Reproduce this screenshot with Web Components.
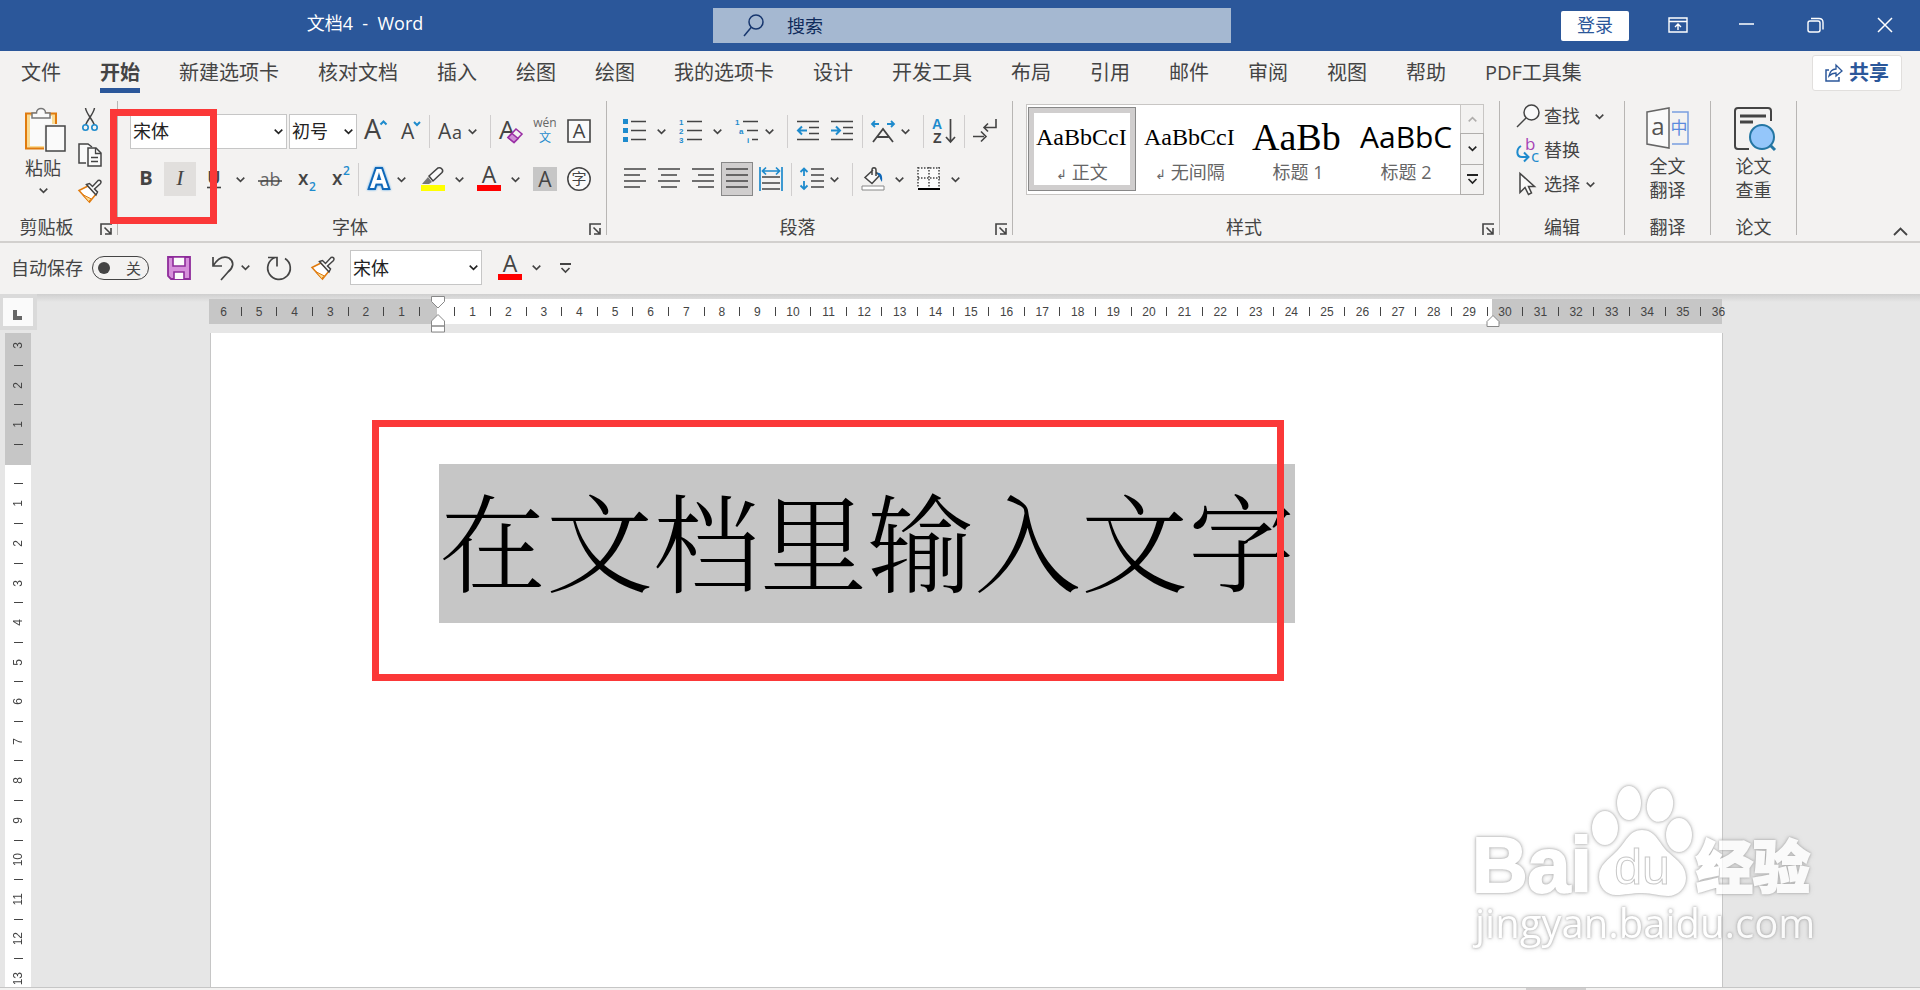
<!DOCTYPE html>
<html lang="zh-CN">
<head>
<meta charset="UTF-8">
<title>文档4 - Word</title>
<style>
    html, body {
        margin: 0;
        height: 100%;
        overflow: hidden;
        font-family: "Open Sans", "Noto Sans CJK SC", sans-serif;
        font-size: 18px;
        color: #444;
    }
    word-window { height: 100%; }
</style>
</head>
<body>
<word-window></word-window>

<script>
const INK = '#444';
const BLUE = '#1e8bcd';

// 24x24 unless a size is given in SIZES
const ICONS = {
    find: `<circle cx="15.500" cy="8.500" r="7.500" fill="#fafafa" stroke="${INK}" stroke-width="1.500"/><path d="M10 14L1 23" stroke="${INK}" stroke-width="1.500"/>`,
    replace: `<text x="9" y="12" font-size="17" fill="#a643b5">b</text><text x="15" y="24" font-size="17" fill="${BLUE}">c</text><path d="M5 8C0 11 0 19 6 19h6M8 14.500l4.500 4.500L8 23.500" fill="none" stroke="${BLUE}" stroke-width="2"/>`,
    select: `<path d="M4 1.500v19l5-5 3.500 7 3-1.500-3-6.500h6z" fill="#fafafa" stroke="${INK}" stroke-width="1.500"/>`,
    paste: `<path d="M1 6.500h30v35H1z" fill="#fadb94" stroke="#e07b0f" stroke-width="2"/><path d="M5 9h22v30H5z" fill="#fafafa"/><path d="M7 11V6h4.500c0-6 9-6 9 0H25v5z" fill="#fafafa" stroke="#777" stroke-width="1.500"/><path d="M19 17h22v28H19z" fill="#f3f2f1"/><path d="M21 19h19v25H21z" fill="#fafafa" stroke="${INK}" stroke-width="1.500"/>`,
    cut: `<path d="M7.500 1c1 6 6 10 9 17M16.500 1c-1 6-6 10-9 17" fill="none" stroke="${INK}" stroke-width="1.500"/><circle cx="7.500" cy="20.500" r="2.700" fill="none" stroke="${BLUE}" stroke-width="1.600"/><circle cx="16.500" cy="20.500" r="2.700" fill="none" stroke="${BLUE}" stroke-width="1.600"/>`,
    copy: `<path d="M8 20H1V1h9l4 3" fill="#fafafa" stroke="${INK}" stroke-width="1.500"/><path d="M10 5h8l5 5v13H10z" fill="#fafafa" stroke="${INK}" stroke-width="1.500"/><path d="M17.500 5v5.500H23M13 14.500h7M13 18.500h7" fill="none" stroke="${INK}" stroke-width="1.300"/>`,
    brush: `<path d="M1 11.500l9-4.500 8 8-6.500 8z" fill="#fff" stroke="#e07b0f" stroke-width="1.500"/><path d="M4.500 15.500l9 4.500-3 2.500z" fill="#fadb94" stroke="#e07b0f" stroke-width="1"/><path d="M8.500 5.500l3-1 3 3 5.500-6c2-1 4 1 2.500 3l-6 5.500 3 3-1.500 3z" fill="#fafafa" stroke="${INK}" stroke-width="1.500"/>`,
    grow: `<text x="1" y="20" font-size="27" fill="${INK}">A</text><path d="M17.500 5.500L20.500 2.500 23.500 5.500" fill="none" stroke="${BLUE}" stroke-width="2"/>`,
    shrink: `<text x="4" y="20" font-size="21" fill="${INK}">A</text><path d="M17 3L20 6 23 3" fill="none" stroke="${BLUE}" stroke-width="2"/>`,
    case: `<text x="0" y="20" font-size="21" fill="${INK}">A</text><text x="14" y="20" font-size="18" fill="${INK}">a</text>`,
    clear: `<text x="0" y="20" font-size="26" fill="${INK}">A</text><path d="M9 18.500l8-8.500 6 5-8 8.500z" fill="#f3f2f1" stroke="#9a2fa5" stroke-width="1.600"/><path d="M9 18.500l4-4 6 5-4 4z" fill="#cf8fd6" stroke="#9a2fa5" stroke-width="1.600"/>`,
    pinyin: `<text x="12" y="8" font-size="12" text-anchor="middle" fill="#666">wén</text><text x="12" y="23" font-size="12" text-anchor="middle" fill="${BLUE}">文</text>`,
    charbox: `<path d="M1 1h22v22H1z" fill="#fafafa" stroke="${INK}" stroke-width="1.600"/><text x="12" y="19" font-size="20" text-anchor="middle" fill="${INK}">A</text>`,
    bold: `<text x="12" y="18" font-size="20" font-weight="700" text-anchor="middle" fill="${INK}">B</text>`,
    italic: `<text x="12" y="18" font-size="22" font-style="italic" font-family="Liberation Serif, serif" text-anchor="middle" fill="${INK}">I</text>`,
    underline: `<text x="12" y="17" font-size="18" font-weight="600" text-anchor="middle" fill="${INK}">U</text><path d="M5 20.500h14" stroke="${INK}" stroke-width="1.600"/>`,
    strike: `<text x="12" y="19" font-size="18" text-anchor="middle" fill="#666">ab</text><path d="M0 14h24" stroke="${INK}" stroke-width="1.500"/>`,
    sub: `<text x="6" y="18" font-size="19" font-weight="600" fill="${INK}">x</text><text x="17" y="24" font-size="12" font-weight="600" fill="${BLUE}">2</text>`,
    sup: `<text x="6" y="18" font-size="19" font-weight="600" fill="${INK}">x</text><text x="17" y="8" font-size="12" font-weight="600" fill="${BLUE}">2</text>`,
    effects: `<text x="12" y="21" font-size="26" font-weight="700" text-anchor="middle" fill="#fff" stroke="#1068b8" stroke-width="4" paint-order="stroke">A</text>`,
    highlight: `<path d="M7 10l4 5-3 2H1z" fill="#777"/><path d="M8 9L17 1c3-1 6 2 4 4.500l-9 8.500z" fill="#fafafa" stroke="${INK}" stroke-width="1.500"/><path d="M0 18h24v6H0z" fill="#ff0"/>`,
    color: `<text x="12" y="16" font-size="23" text-anchor="middle" fill="${INK}">A</text><path d="M0 18h24v6H0z" fill="#f00"/>`,
    shading: `<path d="M0 0h24v24H0z" fill="#c6c6c6"/><text x="12" y="20" font-size="21" text-anchor="middle" fill="${INK}">A</text>`,
    circled: `<circle cx="12" cy="12" r="11.200" fill="#fafafa" stroke="${INK}" stroke-width="1.500"/><text x="12" y="17" font-size="15" text-anchor="middle" fill="${INK}">字</text>`,
    bullets: `<path d="M0 0h5v5H0zM0 9h5v5H0zM0 18h5v5H0z" fill="${BLUE}"/><path d="M8 2.500h15M8 11.500h15M8 20.500h15" stroke="${INK}" stroke-width="1.600"/>`,
    numbers: `<g font-size="8" font-weight="700" fill="${BLUE}" font-family="Liberation Sans, sans-serif"><text x="0" y="6">1</text><text x="0" y="15">2</text><text x="0" y="24">3</text></g><path d="M8 2.500h15M8 11.500h15M8 20.500h15" stroke="${INK}" stroke-width="1.600"/>`,
    levels: `<g font-size="8" font-weight="700" fill="${BLUE}" font-family="Liberation Sans, sans-serif"><text x="0" y="6">1</text><text x="4" y="15">a</text><text x="12" y="24">i</text></g><path d="M8 2.500h15M12 11.500h11M17 20.500h6" stroke="${INK}" stroke-width="1.600"/>`,
    outdent: `<path d="M1 2.500h22M13 8.500h10M13 14.500h10M1 20.500h22" stroke="${INK}" stroke-width="1.600"/><path d="M11 11.500H2M6 7.500l-4 4 4 4" fill="none" stroke="${BLUE}" stroke-width="2"/>`,
    indent: `<path d="M1 2.500h22M13 8.500h10M13 14.500h10M1 20.500h22" stroke="${INK}" stroke-width="1.600"/><path d="M1 11.500h9M6 7.500l4 4-4 4" fill="none" stroke="${BLUE}" stroke-width="2"/>`,
    scale: `<path d="M2 23L12 10l10 13M6.500 18h11" fill="none" stroke="${INK}" stroke-width="1.800"/><path d="M8 5H1M4 2L1 5l3 3M16 5h7M20 2l3 3-3 3" fill="none" stroke="${BLUE}" stroke-width="1.800"/>`,
    sort: `<g font-family="Liberation Sans, sans-serif" font-size="14" font-weight="700"><text x="0" y="10" fill="${BLUE}">A</text><text x="1" y="24" fill="${INK}">Z</text></g><path d="M18.500 0v23M14 18l4.500 5 4.500-5" fill="none" stroke="${INK}" stroke-width="1.700"/>`,
    marks: `<path d="M23 0v8.500H11M15 4.500l-4 4 4 4M0 17.500h11M8 12.500l5 5-5 5" fill="none" stroke="${INK}" stroke-width="1.600"/>`,
    left: `<path d="M1 2h22M1 8h16M1 14h22M1 20h16" stroke="${INK}" stroke-width="1.700"/>`,
    center: `<path d="M1 2h22M4 8h16M1 14h22M4 20h16" stroke="${INK}" stroke-width="1.700"/>`,
    right: `<path d="M1 2h22M7 8h16M1 14h22M7 20h16" stroke="${INK}" stroke-width="1.700"/>`,
    justify: `<path d="M1 2h22M1 8h22M1 14h22M1 20h22" stroke="${INK}" stroke-width="1.700"/>`,
    distribute: `<path d="M1 0v24M23 0v24M4 4h16M7 .500L3.500 4 7 7.500M17 .500L20.500 4 17 7.500" fill="none" stroke="${BLUE}" stroke-width="1.700"/><path d="M3 10h18M3 16h18M3 22h18" stroke="${INK}" stroke-width="1.700"/>`,
    spacing: `<path d="M4 2v7M.500 5L4 1.500 7.500 5M4 14v8M.500 18.500L4 22l3.500-3.500" fill="none" stroke="${BLUE}" stroke-width="1.800"/><path d="M11 2h13M11 8h13M11 14h13M11 20h13" stroke="${INK}" stroke-width="1.700"/>`,
    fill: `<path d="M12 3L4 10.500l7 6 7.500-8L15 5M11 8V3c0-3 4-3 4 0v6" fill="#fafafa" stroke="${INK}" stroke-width="1.500"/><path d="M16 6c4-1 6 3 5 9-2-2-2-5-3-6z" fill="#1068b8"/><path d="M1 19h22v4H1z" fill="#fff" stroke="#888"/>`,
    borders: `<path d="M1 1h21v20H1z" fill="#fafafa"/><path d="M1 1h22M1 11h22M1 0v20M12 0v20M22 0v20" stroke="${INK}" stroke-width="1.500" stroke-dasharray="1.500 1.500"/><path d="M1 22h22" stroke="#000" stroke-width="2"/>`,
    translate: `<path d="M1 5L23 1v40L1 37z" fill="#fafafa" stroke="#666" stroke-width="1.500"/><text x="12" y="28" font-size="24" text-anchor="middle" fill="#555">a</text><path d="M26 5h16v32H26" fill="none" stroke="#7a9fe0" stroke-width="1.500"/><text x="33" y="27" font-size="17" text-anchor="middle" fill="#5b8ade">中</text>`,
    paper: `<g transform="translate(2 0)"><path d="M15 42H4q-3 0-3-3V4q0-3 3-3h30q3 0 3 3v10" fill="none" stroke="${INK}" stroke-width="2"/><path d="M6 9h26M6 15h13" stroke="${INK}" stroke-width="3"/><circle cx="28" cy="30" r="12" fill="#94c6fa" stroke="#2476a3" stroke-width="2"/><path d="M36 38l5 5" stroke="#2476a3" stroke-width="3"/></g>`,
    save: `<path d="M1 1h22v22H4l-3-3z" fill="#d68fdb" stroke="#8e2c9b" stroke-width="1.800"/><path d="M6 1h12v9H6zM7 23v-7h10v7" fill="#fafafa" stroke="#8e2c9b" stroke-width="1.600"/>`,
    undo: `<path d="M2 1v9h9M2 10c5-8 11-10 16-8 6 4 4 10-1 14l-7 8" fill="none" stroke="${INK}" stroke-width="1.700"/>`,
    redo: `<path d="M8 1.500A11.300 11.300 0 1 0 18 2.500M1 1.500h9v9" fill="none" stroke="${INK}" stroke-width="1.700"/>`,
    launcher: `<path d="M1 12V1h11" fill="none" stroke="${INK}" stroke-width="1.600"/><path d="M4.500 4.500L11 11M11 5v6H5" fill="none" stroke="${INK}" stroke-width="1.600"/>`,
    chevron: `<path d="M.700.700L4.500 4.300 8.300.700" fill="none" stroke="currentColor" stroke-width="1.600"/>`,
    up: `<path d="M.700 4.300L4.500.700 8.300 4.300" fill="none" stroke="currentColor" stroke-width="1.600"/>`,
    more: `<path d="M0 1h11" stroke="currentColor" stroke-width="2"/><path d="M1.500 5L5.500 9l4-4" fill="none" stroke="currentColor" stroke-width="1.600"/>`,
    collapse: `<path d="M1 8L7.500 1.500 14 8" fill="none" stroke="${INK}" stroke-width="1.800"/>`,
    search: `<circle cx="13" cy="8" r="7" fill="none" stroke="#17366e" stroke-width="1.500"/><path d="M8.500 13L1 22" stroke="#17366e" stroke-width="1.500"/>`,
    display: `<path d="M1 1h18v14H1zM1 4.500h18M10 13V7M7 10l3-3 3 3" fill="none" stroke="#fff" stroke-width="1.400"/>`,
    minimize: `<path d="M2 7h15" stroke="#fff" stroke-width="1.500"/>`,
    restore: `<rect x="2" y="4" width="12" height="11" rx="2" fill="none" stroke="#fff" stroke-width="1.400"/><path d="M5 1.500h8q4 0 4 4v7" fill="none" stroke="#fff" stroke-width="1.400"/>`,
    close: `<path d="M3 1l14 14M17 1L3 15" stroke="#fff" stroke-width="1.500"/>`,
    share: `<path d="M4 6H1v11h13v-4" fill="none" stroke="#2b579a" stroke-width="1.500"/><path d="M4 12c1-5 3-7 7-7V1l6 6-6 5V9c-3 0-5 1-7 3z" fill="none" stroke="#2b579a" stroke-width="1.300"/>`
};

const SIZES = {
    paste: [42, 46], translate: [43, 43], paper: [43, 43], launcher: [13, 13], chevron: [9, 5], up: [9, 5],
    more: [11, 10], collapse: [15, 9], search: [21, 23], display: [20, 16], minimize: [20, 16],
    restore: [20, 16], close: [20, 16], share: [18, 18]
};

function icon(name) {
    const [w, h] = SIZES[name] || [24, 24];
    return `<svg class="icon icon-${name}" width="${w}" height="${h}" viewBox="0 0 ${w} ${h}" aria-hidden="true">${ICONS[name]}</svg>`;
}

const RESET = `
    *, *::before, *::after { box-sizing: border-box; }
    button, input, select {
        margin: 0; padding: 0; border: 0; background: none;
        font: inherit; color: inherit; border-radius: 0; outline: none;
    }
    .icon { display: block; flex: none; overflow: visible; }
    .icon-effects { filter: drop-shadow(0 0 1px #4aa3e8); }
`;

// Base class: every element draws its own markup once
class WordElement extends HTMLElement {
    constructor() {
        super();
        this.attachShadow({ mode: 'open' });
    }

    connectedCallback() {
        this.shadowRoot.innerHTML = `<style>${RESET}${this.styles()}</style>${this.render()}`;
    }

    styles() { return ''; }
    render() { return '<slot></slot>'; }
}

class ToolButton extends WordElement {
    styles() {
        return `
            :host { display: block; }
            button { display: flex; align-items: center; height: 34px; width: 32px; padding: 0 4px; }
            :host([menu="split"]) button { width: 54px; gap: 10px; }
            :host([menu="drop"]) button { width: 52px; gap: 6px; }
            :host([state="hover"]) button { background: #e1dfdd; }
            :host([state="on"]) button { background: #d0cece; border: 1px solid #888; padding: 0 3px; }
            :host([compact]) button { height: 24px; padding: 0; width: 24px; }
        `;
    }

    render() {
        const menu = this.hasAttribute('menu') ? icon('chevron') : '';
        return `<button type="button" aria-label="${this.getAttribute('icon')}">${icon(this.getAttribute('icon'))}${menu}</button>`;
    }
}

class FontSelect extends WordElement {
    styles() {
        return `
            :host { display: block; }
            label { display: grid; align-items: center; position: relative; }
            select {
                grid-area: 1 / 1; appearance: none; width: 100%; height: 35px; padding: 0 24px 0 2px;
                background: #fff; border: 1px solid #c6c6c6; color: #222; line-height: 32px;
            }
            .icon { grid-area: 1 / 1; justify-self: end; margin-right: 4px; color: #222; pointer-events: none; }
        `;
    }

    render() {
        return `<label><select aria-label="${this.getAttribute('label')}"><option>${this.getAttribute('value')}</option></select>${icon('chevron')}</label>`;
    }
}

class ToolSeparator extends WordElement {
    styles() {
        return ':host { display: block; width: 1px; height: 33px; margin: 0 2px; background: #d0cece; }';
    }
    render() { return ''; }
}

class RibbonGroup extends WordElement {
    styles() {
        return `
            :host { display: flex; flex-direction: column; height: 134px; border-right: 1px solid #b8b6b4; }
            .body { flex: 1; padding: var(--group-padding, 12px 11px 0 12px); }
            footer { display: flex; height: 16px; line-height: 16px; }
            span { flex: 1; text-align: center; white-space: nowrap; }
            button { width: 24px; padding: 4px 0 0 7px; }
        `;
    }

    render() {
        const launcher = this.hasAttribute('launcher') ? `<button type="button" aria-label="更多">${icon('launcher')}</button>` : '';
        return `<div class="body"><slot></slot></div><footer><span>${this.getAttribute('label')}</span>${launcher}</footer>`;
    }
}

class TitleBar extends WordElement {
    styles() {
        return `
            :host {
                display: grid; grid-template-columns: 713fr 518fr 689fr; align-items: center;
                height: 51px; background: #2b579a; color: #fff;
            }
            h1 { margin: 0; padding: 0 0 6px 17px; font-size: 18px; line-height: 24px; font-weight: 400; text-align: center; white-space: pre; }
            .field { display: flex; align-items: center; gap: 23px; height: 35px; padding-left: 30px; background: #a5b8d1; color: #0f2b5b; }
            .field input { flex: 1; height: 35px; }
            .field input::placeholder { color: #0f2b5b; opacity: 1; }
            .right { display: flex; justify-content: flex-end; align-items: center; padding-right: 1px; }
            .login { width: 68px; height: 30px; margin-right: 14px; padding-bottom: 2px; border-radius: 2px; background: #fff; color: #2b579a; line-height: 28px; }
            .win { display: grid; place-items: center; width: 69px; height: 51px; padding-bottom: 1px; }
        `;
    }

    render() {
        const buttons = ['display', 'minimize', 'restore', 'close']
            .map(name => `<button type="button" class="win" aria-label="${name}">${icon(name)}</button>`).join('');
        return `
            <h1>文档4  -  Word</h1>
            <label class="field">${icon('search')}<input type="text" placeholder="搜索" aria-label="搜索"></label>
            <div class="right"><button type="button" class="login">登录</button>${buttons}</div>
        `;
    }
}

class RibbonTabs extends WordElement {
    styles() {
        return `
            :host { display: flex; align-items: flex-start; justify-content: space-between; height: 50px; padding: 0 18px 0 21px; }
            nav { display: flex; gap: 39px; padding-top: 8px; font-size: 20px; }
            nav button { padding: 0 0 1px; border-bottom: 5px solid transparent; line-height: 28px; white-space: nowrap; }
            nav button[aria-selected="true"] { font-weight: 700; border-color: #2b579a; }
            .share {
                display: flex; align-items: center; justify-content: center; gap: 6px; height: 36px; width: 90px; margin-top: 4px;
                background: #fff; border: 1px solid #e1dfdd; border-radius: 3px;
                color: #2b579a; font-size: 20px; line-height: 28px; font-weight: 700;
            }
        `;
    }

    render() {
        const tabs = ['文件', '开始', '新建选项卡', '核对文档', '插入', '绘图', '绘图', '我的选项卡', '设计', '开发工具',
            '布局', '引用', '邮件', '审阅', '视图', '帮助', 'PDF工具集'];
        return `
            <nav role="tablist">${tabs.map(tab => `<button type="button" role="tab" aria-selected="${tab === '开始'}">${tab}</button>`).join('')}</nav>
            <button type="button" class="share">${icon('share')}共享</button>
        `;
    }
}

class StyleCard extends WordElement {
    styles() {
        return `
            :host { display: block; width: 108px; }
            button { display: flex; flex-direction: column; width: 100%; height: 84px; padding: 6px; overflow: hidden; }
            :host([selected]) button { border: 1px solid #888; box-shadow: inset 0 0 0 5px #d0cece; padding: 5px; }
            .sample {
                width: 100%; height: 48px; line-height: 48px; padding: 0 2px; overflow: hidden;
                text-align: left; color: #000; white-space: nowrap;
                font-size: var(--sample-size, 24px); font-family: var(--sample-font, "Liberation Serif", serif);
            }
            .name { width: 100%; line-height: 22px; color: #666; text-align: center; white-space: pre; }
            small { font-size: 13px; }
        `;
    }

    render() {
        const mark = this.hasAttribute('linked') ? '<small>↲</small> ' : '';
        return `<button type="button"><span class="sample">${this.getAttribute('sample')}</span><span class="name">${mark}<slot></slot></span></button>`;
    }
}

class StyleGallery extends WordElement {
    styles() {
        return `
            :host { display: flex; height: 91px; width: 458px; border: 1px solid #c8c6c4; background: #fff; }
            .cards { display: flex; flex: 1; padding: 2px 0 0 1px; }
            .scroll { display: grid; grid-template-rows: 1fr 1fr 1fr; width: 24px; margin: -1px; background: #f3f2f1; color: #222; }
            .scroll button { display: grid; place-items: center; border: 1px solid #b0aeac; margin-top: -1px; }
            .scroll button:first-child { color: #b0aeac; border-color: #c8c6c4; margin-top: 0; }
        `;
    }

    render() {
        return `
            <div class="cards"><slot></slot></div>
            <div class="scroll">${['up', 'chevron', 'more'].map(name => `<button type="button" aria-label="${name}">${icon(name)}</button>`).join('')}</div>
        `;
    }
}

class WordRibbon extends WordElement {
    styles() {
        return `
            :host { display: flex; height: 142px; border-bottom: 2px solid #d2d0ce; }
            .row { display: flex; align-items: center; gap: 2px; height: 36px; }
            .row + .row { margin-top: 12px; }
            .name { width: 157px; }
            .size { width: 68px; }
            .clipboard { --group-padding: 6px 15px 0 25px; }
            .clipboard .cols { display: flex; gap: 11px; }
            .paste { display: flex; flex-direction: column; align-items: center; width: 42px; line-height: 24px; }
            .paste span { margin: 3px 6px 0 0; }
            .paste .icon-chevron { margin: 8px 6px 0 0; }
            .stack { display: flex; flex-direction: column; gap: 12px; }
            .styles { --group-padding: 3px 15px 0 13px; }
            .h1 { --sample-size: 38px; }
            .h2 { --sample-size: 30px; --sample-font: "Open Sans"; }
            .edit { --group-padding: 0 16px; width: 125px; }
            .edit button { display: flex; align-items: center; gap: 4px; height: 30px; margin-bottom: 4px; white-space: nowrap; line-height: 24px; }
            .edit .icon-chevron { margin-left: 2px; }
            .edit .icon-find + span + .icon-chevron { margin-left: 11px; }
            .wide { --group-padding: 6px 21px 0; width: 86px; }
            .wide button { display: flex; flex-direction: column; align-items: center; gap: 4px; line-height: 24px; width: 43px; }
            .toggle { margin: auto 12px 5px auto; }
        `;
    }

    render() {
        const item = (name, text, menu) => `<button type="button">${icon(name)}<span>${text}</span>${menu ? icon('chevron') : ''}</button>`;
        return `
            <ribbon-group class="clipboard" label="剪贴板" launcher>
                <div class="cols">
                    <button type="button" class="paste">${icon('paste')}<span>粘贴</span>${icon('chevron')}</button>
                    <div class="stack">
                        <tool-button compact icon="cut"></tool-button>
                        <tool-button compact icon="copy"></tool-button>
                        <tool-button compact icon="brush"></tool-button>
                    </div>
                </div>
            </ribbon-group>
            <ribbon-group label="字体" launcher>
                <div class="row">
                    <font-select class="name" label="字体" value="宋体"></font-select>
                    <font-select class="size" label="字号" value="初号"></font-select>
                    <tool-button icon="grow"></tool-button>
                    <tool-button icon="shrink"></tool-button>
                    <tool-separator></tool-separator>
                    <tool-button icon="case" menu="drop"></tool-button>
                    <tool-separator></tool-separator>
                    <tool-button icon="clear"></tool-button>
                    <tool-button icon="pinyin"></tool-button>
                    <tool-button icon="charbox"></tool-button>
                </div>
                <div class="row">
                    <tool-button icon="bold"></tool-button>
                    <tool-button icon="italic" state="hover"></tool-button>
                    <tool-button icon="underline" menu="split"></tool-button>
                    <tool-button icon="strike"></tool-button>
                    <tool-button icon="sub"></tool-button>
                    <tool-button icon="sup"></tool-button>
                    <tool-separator></tool-separator>
                    <tool-button icon="effects" menu="drop"></tool-button>
                    <tool-button icon="highlight" menu="split"></tool-button>
                    <tool-button icon="color" menu="split"></tool-button>
                    <tool-button icon="shading"></tool-button>
                    <tool-button icon="circled"></tool-button>
                </div>
            </ribbon-group>
            <ribbon-group label="段落" launcher>
                <div class="row">
                    <tool-button icon="bullets" menu="split"></tool-button>
                    <tool-button icon="numbers" menu="split"></tool-button>
                    <tool-button icon="levels" menu="drop"></tool-button>
                    <tool-separator></tool-separator>
                    <tool-button icon="outdent"></tool-button>
                    <tool-button icon="indent"></tool-button>
                    <tool-separator></tool-separator>
                    <tool-button icon="scale" menu="drop"></tool-button>
                    <tool-separator></tool-separator>
                    <tool-button icon="sort"></tool-button>
                    <tool-separator></tool-separator>
                    <tool-button icon="marks"></tool-button>
                </div>
                <div class="row">
                    <tool-button icon="left"></tool-button>
                    <tool-button icon="center"></tool-button>
                    <tool-button icon="right"></tool-button>
                    <tool-button icon="justify" state="on"></tool-button>
                    <tool-button icon="distribute"></tool-button>
                    <tool-separator></tool-separator>
                    <tool-button icon="spacing" menu="drop"></tool-button>
                    <tool-separator></tool-separator>
                    <tool-button icon="fill" menu="split"></tool-button>
                    <tool-button icon="borders" menu="split"></tool-button>
                </div>
            </ribbon-group>
            <ribbon-group class="styles" label="样式" launcher>
                <style-gallery>
                    <style-card sample="AaBbCcI" linked selected>正文</style-card>
                    <style-card sample="AaBbCcI" linked>无间隔</style-card>
                    <style-card class="h1" sample="AaBb">标题 1</style-card>
                    <style-card class="h2" sample="AaBbC">标题 2</style-card>
                </style-gallery>
            </ribbon-group>
            <ribbon-group class="edit" label="编辑">
                ${item('find', '查找', true)}${item('replace', '替换')}${item('select', '选择', true)}
            </ribbon-group>
            <ribbon-group class="wide" label="翻译">${item('translate', '全文<br>翻译')}</ribbon-group>
            <ribbon-group class="wide" label="论文">${item('paper', '论文<br>查重')}</ribbon-group>
            <button type="button" class="toggle" aria-label="折叠功能区">${icon('collapse')}</button>
        `;
    }
}

class QuickAccess extends WordElement {
    styles() {
        return `
            :host { display: flex; align-items: center; height: 51px; padding: 0 11px 2px; }
            .autosave { display: flex; align-items: center; gap: 9px; margin-right: 14px; line-height: 24px; }
            .switch { display: grid; align-items: center; width: 57px; height: 24px; }
            .switch > * { grid-area: 1 / 1; }
            input { appearance: none; width: 57px; height: 24px; border: 1px solid #444; border-radius: 12px; }
            input::before { content: ""; display: block; width: 12px; height: 12px; margin: 5px; border-radius: 50%; background: #444; }
            .switch span { justify-self: end; margin-right: 8px; font-size: 15px; line-height: 20px; }
            .font { width: 132px; margin: 0 12px 0 11px; }
            .save { margin-right: 12px; }
            .undo { margin-right: 4px; }
            .redo { margin-right: 12px; }
            .custom { margin-left: 12px; }
        `;
    }

    render() {
        return `
            <label class="autosave">自动保存<span class="switch"><input type="checkbox" role="switch"><span>关</span></span></label>
            <tool-button class="save" icon="save"></tool-button>
            <tool-button class="undo" icon="undo" menu="drop"></tool-button>
            <tool-button class="redo" icon="redo"></tool-button>
            <tool-button icon="brush"></tool-button>
            <font-select class="font" label="字体" value="宋体"></font-select>
            <tool-button icon="color" menu="split"></tool-button>
            <button type="button" class="custom" aria-label="自定义">${icon('more')}</button>
        `;
    }
}

class EditRuler extends WordElement {
    styles() {
        return `
            :host {
                display: flex; justify-content: space-between; align-items: center; position: relative;
                font: 12px "Liberation Sans", sans-serif; color: #444;
            }
            :host([axis="x"]) {
                height: 25px; padding: 0 3px 0 14px;
                background: linear-gradient(to right, #c6c6c6 228px, #fff 228px, #fff calc(100% - 230px), #c6c6c6 calc(100% - 230px));
            }
            :host([axis="y"]) {
                flex-direction: column; width: 26px; padding: 12px 0 8px;
                background: linear-gradient(to bottom, #c6c6c6 132px, #fff 132px);
            }
            span { display: flex; justify-content: center; align-items: center; width: 1px; height: 1px; white-space: nowrap; }
            i { flex: none; width: 1px; height: 9px; background: #444; }
            :host([axis="y"]) i { width: 9px; height: 1px; }
            :host([axis="y"]) b { writing-mode: vertical-rl; transform: rotate(180deg); }
            b { font-weight: 400; }
            svg { position: absolute; overflow: visible; fill: #fff; stroke: #888; }
            .start { left: 222px; top: -3px; }
            .end { right: 222px; top: 16px; }
        `;
    }

    render() {
        const from = Number(this.getAttribute('from'));
        const to = Number(this.getAttribute('to'));
        const marks = [];
        for (let n = from; n <= to; n++) {
            marks.push(`<span>${n === 0 ? '' : `<b>${Math.abs(n)}</b>`}</span>`);
            if (n < to) marks.push('<span><i></i></span>');
        }
        const stops = this.getAttribute('axis') === 'x' ? `
            <svg class="start" width="14" height="37"><path d="M.500.500h13v5L7 12 .500 5.500zM7 18.500l6.500 6.500v5H.500v-5zM.500 30h13v6H.500z"/></svg>
            <svg class="end" width="14" height="13"><path d="M7 .500l6 6v5H1v-5z"/></svg>` : '';
        return marks.join('') + stops;
    }
}

class DocPage extends WordElement {
    styles() {
        return `
            :host { display: block; background: #fff; border: solid #c6c6c6; border-width: 0 1px; padding: 131px 228px 0; }
            p { margin: 0; font: 300 107px/149px "Noto Serif CJK SC", "Noto Sans CJK SC", serif; color: #000; white-space: nowrap; }
            mark { display: inline-block; height: 159px; background: #c6c6c6; color: inherit; }
        `;
    }

    render() { return '<p><mark><slot></slot></mark></p>'; }
}

class WorkSpace extends WordElement {
    styles() {
        return `
            :host {
                display: grid; grid-template: 39px minmax(0, 1fr) / 37px minmax(0, 1fr);
                background: linear-gradient(#cfcfcf, #e6e6e6 8px);
            }
            .corner { width: 37px; height: 36px; border: 4px solid #dadada; border-left-width: 3px; background: #fafafa; }
            .corner svg { display: block; margin: 12px 0 0 10px; }
            .across { margin: 5px 198px 0 172px; }
            .down { margin-left: 5px; }
            doc-page { margin: 0 197px 0 173px; }
        `;
    }

    render() {
        return `
            <div class="corner"><svg width="9" height="10"><path d="M2 0v8h7" fill="none" stroke="#666" stroke-width="4"/></svg></div>
            <edit-ruler class="across" axis="x" from="-6" to="36"></edit-ruler>
            <edit-ruler class="down" axis="y" from="-3" to="13"></edit-ruler>
            <doc-page><slot></slot></doc-page>
        `;
    }
}

class StatusStrip extends WordElement {
    styles() {
        return `
            :host { display: block; height: 3px; border-top: 1px solid #c6c6c6; background: #f3f2f1; }
            div { width: 60px; height: 2px; margin-left: auto; margin-right: 334px; background: #d0cece; }
        `;
    }
    render() { return '<div></div>'; }
}

// Red callout laid over the window
class CalloutFrame extends WordElement {
    styles() {
        return ':host { display: block; position: absolute; box-sizing: border-box; border: 7px solid #fb3838; pointer-events: none; }';
    }
    render() { return ''; }
}

class SiteMark extends WordElement {
    styles() {
        return `
            :host { display: block; position: absolute; pointer-events: none; }
            svg { display: block; overflow: visible; fill: #fff; opacity: .8; filter: drop-shadow(0 0 1px #999) drop-shadow(0 0 2px #bbb); }
            .bold { stroke: #fff; stroke-width: 2; }
            .du { fill: #fff; stroke: #bbb; stroke-width: 1; }
        `;
    }

    render() {
        return `
            <svg width="350" height="170" viewBox="0 0 350 170">
                <text class="bold" x="0" y="107" font-family="Liberation Sans, sans-serif" font-size="77" font-weight="700">Bai</text>
                <ellipse cx="133" cy="43" rx="13" ry="17"/><ellipse cx="157" cy="18" rx="12" ry="17"/>
                <ellipse cx="188" cy="20" rx="13" ry="17" transform="rotate(12 188 20)"/><ellipse cx="207" cy="50" rx="13" ry="17"/>
                <path d="M170 45c14 0 17 14 26 22 10 9 18 14 18 26 0 10-8 18-18 18-9 0-16-3-26-3s-17 2-26 2c-10 0-17-8-17-18 0-12 9-17 18-26 9-9 12-21 25-21z"/>
                <text class="du" x="170" y="99" text-anchor="middle" font-family="Liberation Sans, sans-serif" font-size="50">du</text>
                <text class="bold" x="224" y="103" font-family="Noto Sans CJK SC, sans-serif" font-size="57" font-weight="900">经验</text>
                <text x="3" y="153" font-size="40">jingyan.baidu.com</text>
            </svg>
        `;
    }
}

class WordWindow extends WordElement {
    styles() {
        return `
            :host { display: flex; flex-direction: column; position: relative; overflow: hidden; background: #f3f2f1; }
            work-space { flex: 1; min-height: 0; }
            .format { left: 110px; top: 109px; width: 107px; height: 115px; }
            .text { left: 372px; top: 420px; width: 912px; height: 261px; }
            site-mark { right: 98px; bottom: 35px; }
        `;
    }

    render() {
        return `
            <title-bar></title-bar>
            <ribbon-tabs></ribbon-tabs>
            <word-ribbon></word-ribbon>
            <quick-access></quick-access>
            <work-space>在文档里输入文字</work-space>
            <status-strip></status-strip>
            <callout-frame class="format"></callout-frame>
            <callout-frame class="text"></callout-frame>
            <site-mark></site-mark>
        `;
    }
}

customElements.define('tool-button', ToolButton);
customElements.define('font-select', FontSelect);
customElements.define('tool-separator', ToolSeparator);
customElements.define('ribbon-group', RibbonGroup);
customElements.define('title-bar', TitleBar);
customElements.define('ribbon-tabs', RibbonTabs);
customElements.define('style-card', StyleCard);
customElements.define('style-gallery', StyleGallery);
customElements.define('word-ribbon', WordRibbon);
customElements.define('quick-access', QuickAccess);
customElements.define('edit-ruler', EditRuler);
customElements.define('doc-page', DocPage);
customElements.define('work-space', WorkSpace);
customElements.define('status-strip', StatusStrip);
customElements.define('callout-frame', CalloutFrame);
customElements.define('site-mark', SiteMark);
customElements.define('word-window', WordWindow);
</script>
</body>
</html>
